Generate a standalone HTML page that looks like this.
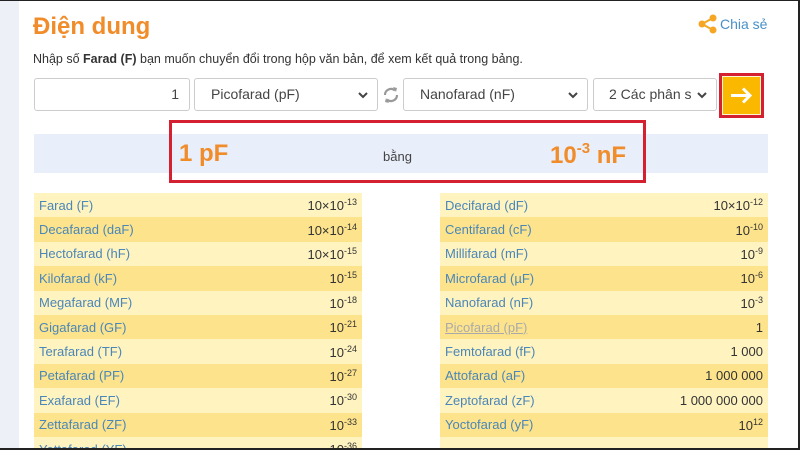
<!DOCTYPE html>
<html style="width:800px;height:450px;overflow:hidden"><head><meta charset="utf-8"><style>
*{box-sizing:border-box;margin:0;padding:0}
body{width:800px;height:450px;overflow:hidden;background:#fff;font-family:"Liberation Sans",Arial,sans-serif;position:relative}
.a{position:absolute}
.strip{left:0;top:0;width:19px;height:450px;background:#eef0f8}
.frame{left:0;top:0;width:800px;height:450px;border-top:1px solid #222;border-right:2px solid #222;border-bottom:2px solid #222}
h1{position:absolute;left:33px;top:13px;font-size:24px;color:#f08c2a;font-weight:bold}
.share{left:698px;top:14px;font-size:14px;color:#4a90c8}
.desc{left:33px;top:52px;font-size:12.5px;color:#333}
.box{border:1px solid #ccc;border-radius:3px;background:#fff;height:33px;top:78px;font-size:14px;color:#444;line-height:31px}
.sel{padding-left:16px}
.chev{position:absolute;right:8px;top:1px}
.band{left:34px;top:134px;width:734px;height:39px;background:#e9eefb}
.res{font-size:24px;font-weight:bold;color:#f08c2a}
.red{border:3px solid #d42030}
.t{width:328px;top:193px}
.row{height:24.4px;display:flex;justify-content:space-between;align-items:center;padding:0 5px;font-size:13px}
.row:nth-child(odd){background:#fff3c0}
.row:nth-child(even){background:#fde48c}
.row span:first-child{color:#4a86b8}
.row span:last-child{color:#333}
sup{font-size:9px;vertical-align:5px}
</style></head><body>
<div class="a strip"></div>
<h1>Điện dung</h1>
<div class="a share"><svg width="20" height="20" viewBox="0 0 20 20" style="vertical-align:-5px;margin-right:2px"><g fill="#f5a623"><circle cx="4" cy="10" r="3.5"/><circle cx="15" cy="4" r="3.5"/><circle cx="15" cy="16" r="3.5"/></g><path d="M4 10L15 4M4 10L15 16" stroke="#f5a623" stroke-width="2"/></svg>Chia sẻ</div>
<div class="a desc">Nhập số <b>Farad (F)</b> bạn muốn chuyển đổi trong hộp văn bản, để xem kết quả trong bảng.</div>
<div class="a box" style="left:34px;width:156px;text-align:right;padding-right:10px">1</div>
<div class="a box sel" style="left:194px;width:184px">Picofarad (pF)<svg class="chev" width="12" height="30" viewBox="0 0 12 30"><path d="M2 13l4 4 4-4" fill="none" stroke="#444" stroke-width="2"/></svg></div>
<svg class="a" style="left:381px;top:85px" width="20" height="20" viewBox="0 0 20 20"><path d="M4 10a6 6 0 0 1 10-4.5M16 10a6 6 0 0 1-10 4.5" fill="none" stroke="#999" stroke-width="2.2"/><path d="M12 2l4 1-1 4zM8 18l-4-1 1-4z" fill="#999"/></svg>
<div class="a box sel" style="left:403px;width:185px">Nanofarad (nF)<svg class="chev" width="12" height="30" viewBox="0 0 12 30"><path d="M2 13l4 4 4-4" fill="none" stroke="#444" stroke-width="2"/></svg></div>
<div class="a box sel" style="left:593px;width:124px;padding-left:15px">2 Các phân s<svg class="chev" width="12" height="30" viewBox="0 0 12 30"><path d="M2 13l4 4 4-4" fill="none" stroke="#444" stroke-width="2"/></svg></div>
<div class="a red" style="left:719px;top:73px;width:45px;height:45px;background:#fbb800;box-shadow:inset 0 0 0 1px #fff6d0"><svg width="39" height="39" viewBox="0 0 39 39"><path d="M9 19.5h19M21 12.5l7 7-7 7" fill="none" stroke="#fff" stroke-width="3"/></svg></div>
<div class="a band"></div>
<div class="a res" style="left:179px;top:140px">1 pF</div>
<div class="a" style="left:383px;top:149px;font-size:13px;color:#444">bằng</div>
<div class="a res" style="left:550px;top:140px">10<sup style="font-size:15px;vertical-align:10px">-3</sup> nF</div>
<div class="a red" style="left:169px;top:120px;width:477px;height:63px"></div>
<div class="a t" style="left:34px">
<div class="row"><span>Farad (F)</span><span>10×10<sup>-13</sup></span></div>
<div class="row"><span>Decafarad (daF)</span><span>10×10<sup>-14</sup></span></div>
<div class="row"><span>Hectofarad (hF)</span><span>10×10<sup>-15</sup></span></div>
<div class="row"><span>Kilofarad (kF)</span><span>10<sup>-15</sup></span></div>
<div class="row"><span>Megafarad (MF)</span><span>10<sup>-18</sup></span></div>
<div class="row"><span>Gigafarad (GF)</span><span>10<sup>-21</sup></span></div>
<div class="row"><span>Terafarad (TF)</span><span>10<sup>-24</sup></span></div>
<div class="row"><span>Petafarad (PF)</span><span>10<sup>-27</sup></span></div>
<div class="row"><span>Exafarad (EF)</span><span>10<sup>-30</sup></span></div>
<div class="row"><span>Zettafarad (ZF)</span><span>10<sup>-33</sup></span></div>
<div class="row"><span>Yottafarad (YF)</span><span>10<sup>-36</sup></span></div>
</div>
<div class="a t" style="left:440px">
<div class="row"><span>Decifarad (dF)</span><span>10×10<sup>-12</sup></span></div>
<div class="row"><span>Centifarad (cF)</span><span>10<sup>-10</sup></span></div>
<div class="row"><span>Millifarad (mF)</span><span>10<sup>-9</sup></span></div>
<div class="row"><span>Microfarad (µF)</span><span>10<sup>-6</sup></span></div>
<div class="row"><span>Nanofarad (nF)</span><span>10<sup>-3</sup></span></div>
<div class="row"><span style="color:#aaa;text-decoration:underline">Picofarad (pF)</span><span>1</span></div>
<div class="row"><span>Femtofarad (fF)</span><span>1 000</span></div>
<div class="row"><span>Attofarad (aF)</span><span>1 000 000</span></div>
<div class="row"><span>Zeptofarad (zF)</span><span>1 000 000 000</span></div>
<div class="row"><span>Yoctofarad (yF)</span><span>10<sup>12</sup></span></div>
<div class="row"><span></span><span></span></div>
</div>
<div class="a frame"></div>
</body></html>
